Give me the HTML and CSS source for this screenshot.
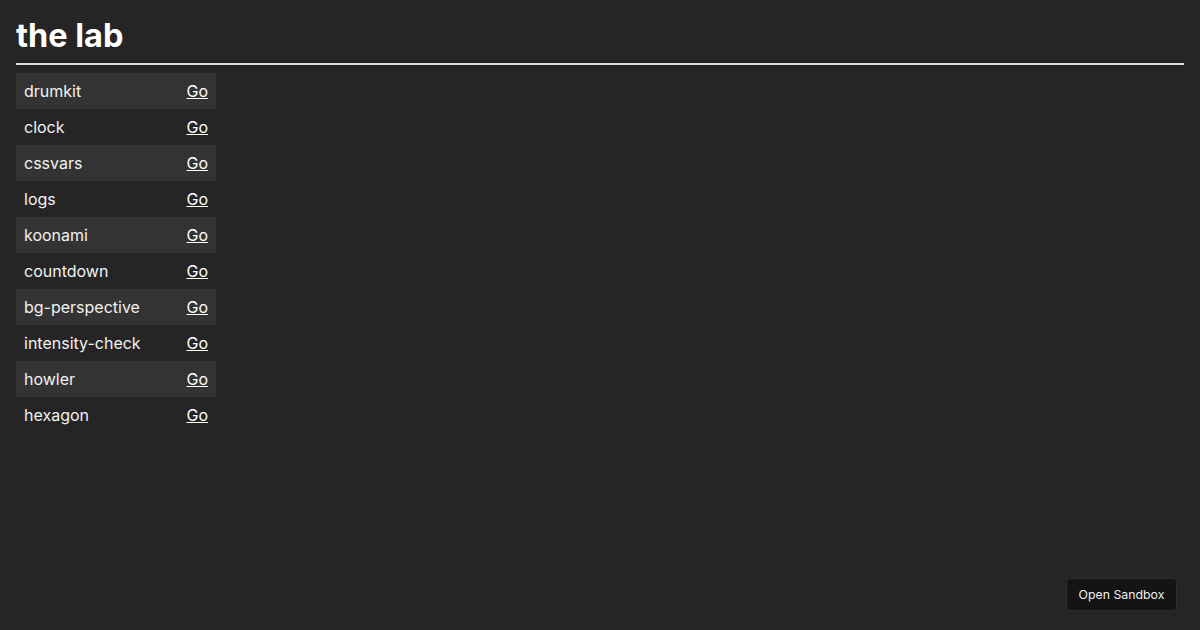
FILE: index.html
```html
<!DOCTYPE html>
<html>
<head>
<meta charset="utf-8">
<title>the lab</title>
<link rel="stylesheet" href="styles.css">
</head>
<body>
<main class="page">
  <h1 class="title">the lab</h1>
  <ul class="list">
    <li class="row"><span class="name">drumkit</span><a class="go" href="#">Go</a></li>
    <li class="row"><span class="name">clock</span><a class="go" href="#">Go</a></li>
    <li class="row"><span class="name">cssvars</span><a class="go" href="#">Go</a></li>
    <li class="row"><span class="name">logs</span><a class="go" href="#">Go</a></li>
    <li class="row"><span class="name">koonami</span><a class="go" href="#">Go</a></li>
    <li class="row"><span class="name">countdown</span><a class="go" href="#">Go</a></li>
    <li class="row"><span class="name">bg-perspective</span><a class="go" href="#">Go</a></li>
    <li class="row"><span class="name">intensity-check</span><a class="go" href="#">Go</a></li>
    <li class="row"><span class="name">howler</span><a class="go" href="#">Go</a></li>
    <li class="row"><span class="name">hexagon</span><a class="go" href="#">Go</a></li>
  </ul>
</main>
<button class="sandbox">Open Sandbox</button>
</body>
</html>
```
FILE: styles.css
```css
html, body {
  margin: 0;
  padding: 0;
  background: #252525;
  height: 100%;
}
body {
  font-family: Inter, "Liberation Sans", sans-serif;
  color: #f0f0f0;
}
.page {
  padding: 16px;
}
.title {
  margin: 0;
  font-size: 32.5px;
  line-height: 39px;
  font-weight: 700;
  color: #ffffff;
  padding-bottom: 8px;
  border-bottom: 2px solid #dcdcdc;
}
.list {
  list-style: none;
  margin: 8px 0 0;
  padding: 0;
  width: 200px;
}
.row {
  display: flex;
  justify-content: space-between;
  align-items: center;
  height: 36px;
  padding: 0 8px;
  font-size: 16px;
}
.row:nth-child(odd) {
  background: #333333;
}
.name {
  color: #f2f2f2;
}
.go {
  color: #ffffff;
  text-decoration: underline;
}
.sandbox {
  position: fixed;
  right: 23px;
  bottom: 19px;
  width: 111px;
  height: 33px;
  background: #141414;
  color: #f0f0f0;
  border: 1px solid #2e2e2e;
  border-radius: 4px;
  font-family: Inter, "Liberation Sans", sans-serif;
  font-size: 12.3px;
  padding: 0;
}
```
